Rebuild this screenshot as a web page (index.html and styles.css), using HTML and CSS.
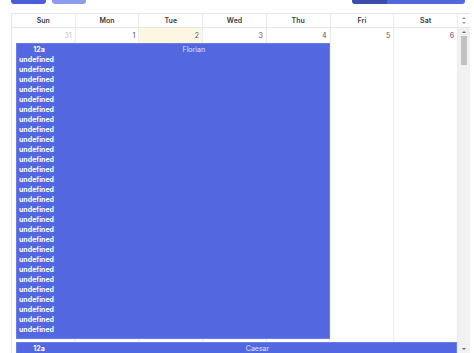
FILE: index.html
```html
<!DOCTYPE html>
<html lang="en">
<head>
<meta charset="utf-8">
<title>Calendar</title>
<link rel="stylesheet" href="styles.css">
</head>
<body>
<div class="cal">
  <div class="toolbar">
    <div class="btn-group">
      <span class="btn btn-prev"></span>
      <span class="btn btn-next"></span>
    </div>
    <div class="btn-group joined">
      <span class="btn btn-month"></span>
      <span class="btn btn-week"></span>
    </div>
  </div>
  <div class="view">
    <div class="head">
      <div class="head-row">
        <div class="th">Sun</div>
        <div class="th">Mon</div>
        <div class="th">Tue</div>
        <div class="th">Wed</div>
        <div class="th">Thu</div>
        <div class="th">Fri</div>
        <div class="th">Sat</div>
      </div>
      <div class="gutter"><span class="caret up"></span><span class="caret down"></span></div>
    </div>
    <div class="body">
      <div class="scroller">
        <div class="week">
          <div class="num other">31</div>
          <div class="num">1</div>
          <div class="num today">2</div>
          <div class="num">3</div>
          <div class="num">4</div>
          <div class="num">5</div>
          <div class="num">6</div>
          <div class="event span5">
            <div class="ev-head"><span class="ev-time">12a</span><span class="ev-title">Florian</span></div>
            <div class="ev-line">undefined</div><div class="ev-line">undefined</div><div class="ev-line">undefined</div><div class="ev-line">undefined</div>
            <div class="ev-line">undefined</div><div class="ev-line">undefined</div><div class="ev-line">undefined</div><div class="ev-line">undefined</div>
            <div class="ev-line">undefined</div><div class="ev-line">undefined</div><div class="ev-line">undefined</div><div class="ev-line">undefined</div>
            <div class="ev-line">undefined</div><div class="ev-line">undefined</div><div class="ev-line">undefined</div><div class="ev-line">undefined</div>
            <div class="ev-line">undefined</div><div class="ev-line">undefined</div><div class="ev-line">undefined</div><div class="ev-line">undefined</div>
            <div class="ev-line">undefined</div><div class="ev-line">undefined</div><div class="ev-line">undefined</div><div class="ev-line">undefined</div>
            <div class="ev-line">undefined</div><div class="ev-line">undefined</div><div class="ev-line">undefined</div><div class="ev-line">undefined</div>
          </div>
          <div class="event span7 next">
            <div class="ev-head"><span class="ev-time">12a</span><span class="ev-title">Caesar</span></div>
          </div>
        </div>
      </div>
      <div class="vscroll">
        <span class="arrow"><span class="caret up"></span></span>
        <span class="thumb"></span>
        <span class="track"></span>
        <span class="arrow"><span class="caret down"></span></span>
      </div>
    </div>
  </div>
</div>
</body>
</html>
```

FILE: styles.css
```css
html, body {
  margin: 0;
  padding: 0;
  overflow: hidden;
  background: #fff;
}

body {
  font-family: "Inter", "Noto Sans", sans-serif;
  color: #333;
}

.cal {
  padding: 0 4px 0 11px;
}

.toolbar {
  display: flex;
  justify-content: space-between;
  height: 4px;
  margin-bottom: 9px;
  padding-right: 5px;
}

.btn-group {
  display: flex;
  gap: 6px;
}

.btn-group.joined {
  gap: 0;
}

.btn {
  display: block;
  height: 4px;
  border-radius: 0 0 3px 3px;
}

.btn-prev { width: 35px; background: #4a5ed8; }
.btn-next { width: 34px; background: #8d9bed; }
.btn-month { width: 35px; background: #3b4da9; border-radius: 0 0 0 3px; }
.btn-week { width: 78px; background: #5167de; border-radius: 0 0 3px 0; }

.view {
  border-left: 1px solid #e6e6e6;
}

.head {
  display: flex;
  border-top: 1px solid #e6e6e6;
  border-bottom: 1px solid #e6e6e6;
}

.head-row {
  flex: 1;
  display: grid;
  grid-template-columns: repeat(7, 1fr);
}

.th {
  height: 13px;
  line-height: 13px;
  text-align: center;
  font-size: 7px;
  font-weight: 600;
  color: #3a3a3a;
  border-right: 1px solid #ececec;
}

.gutter {
  width: 12px;
  display: flex;
  flex-direction: column;
  align-items: center;
  justify-content: center;
  gap: 3px;
}

.caret {
  display: block;
  width: 0;
  height: 0;
  border-left: 2px solid transparent;
  border-right: 2px solid transparent;
}

.caret.up { border-bottom: 2px solid #9a9a9a; }
.caret.down { border-top: 2px solid #9a9a9a; }

.body {
  display: flex;
  height: 325px;
}

.scroller {
  flex: 1;
  overflow: hidden;
}

.vscroll {
  width: 12px;
  background: #f1f1f1;
  display: flex;
  flex-direction: column;
}

.arrow {
  height: 8px;
  display: flex;
  align-items: center;
  justify-content: center;
}

.arrow .caret.up { border-bottom-color: #6a6a6a; }
.arrow .caret.down { border-top-color: #6a6a6a; }

.thumb {
  height: 29px;
  margin: 0 3px;
  background: #c1c1c1;
}

.track {
  flex: 1;
}

.week {
  display: grid;
  grid-template-columns: repeat(7, 1fr);
  align-content: start;
  min-height: 100%;
  background-image: linear-gradient(90deg, transparent calc(100% - 1px), #ececec 0);
  background-size: calc(100% / 7) 100%;
  background-repeat: repeat-x;
}

.num {
  height: 15px;
  line-height: 15px;
  text-align: right;
  padding-right: 3px;
  font-size: 7px;
  color: #555;
  border-right: 1px solid #ececec;
}

.num.other {
  color: #c4c4c4;
}

.num.today {
  background: #fdf7e1;
}

.event {
  background: #5368e0;
  border: 1px solid #6c7fe6;
  color: #fff;
  margin: 0 1px 0 4px;
  padding: 1px 0 3px 2px;
  font-size: 7px;
  line-height: 10px;
}

.span5 { grid-column: 1 / 6; }
.span7 { grid-column: 1 / 8; }

.event.next {
  margin-top: 3px;
}

.ev-head {
  display: flex;
}

.ev-time {
  width: 40px;
  text-align: center;
  font-weight: 700;
}

.ev-title {
  flex: 1;
  text-align: center;
  color: #dde3ff;
}

.ev-line {
  font-weight: 700;
}
```
